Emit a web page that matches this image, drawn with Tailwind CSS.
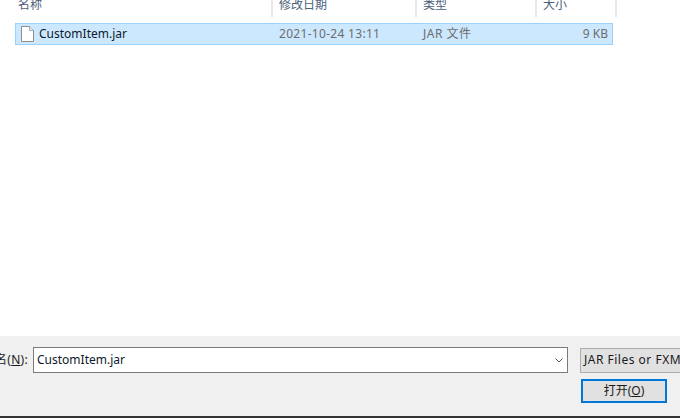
<!DOCTYPE html>
<html><head><meta charset="utf-8"><script src="https://cdn.jsdelivr.net/npm/@tailwindcss/browser@4"></script></head>
<body class="m-0 overflow-hidden bg-white">
<div class="w-[680px] h-[418px] flex flex-col overflow-hidden bg-white text-[12px] font-['Noto_Sans','Noto_Sans_CJK_SC',sans-serif]">
  <div class="h-[336px] flex flex-col shrink-0">
    <div class="h-[17px] flex shrink-0 text-[#4c607a] overflow-hidden">
      <div class="w-[273px] pl-[18px] border-r-2 border-[#e9e9e9] leading-[10px]">名称</div>
      <div class="w-[144px] pl-[6px] border-r-2 border-[#e9e9e9] leading-[10px]">修改日期</div>
      <div class="w-[120px] pl-[6px] border-r-2 border-[#e9e9e9] leading-[10px]">类型</div>
      <div class="w-[80px] pl-[6px] border-r-2 border-[#e9e9e9] leading-[10px]">大小</div>
    </div>
    <div class="ml-[15px] mt-[6px] w-[598px] h-[22px] flex items-center border border-[#99d1ff] bg-[#cce8ff]">
      <svg class="ml-[5px] shrink-0" width="13" height="16" viewBox="0 0 13 16"><path d="M.5.5h8l4 4v11H.5z" fill="#fff" stroke="#8f8f8f"/><path d="M8.5.5v4h4" fill="#f0f0f0" stroke="#a8a8a8"/></svg>
      <span class="ml-[5px] w-[240px] text-[#0c1a2b]">CustomItem.jar</span>
      <span class="w-[144px] text-[#6d6d6d] tracking-[.3px]">2021-10-24 13:11</span>
      <span class="w-[120px] text-[#6d6d6d] tracking-[.5px]">JAR 文件</span>
      <span class="w-[65px] text-right text-[#6d6d6d]">9 KB</span>
    </div>
  </div>
  <div class="h-[80px] bg-[#f0f0f0] shrink-0 relative flex flex-col">
    <div class="flex mt-[11px] h-[26px] items-center">
      <div class="w-[33px] shrink-0 flex justify-end pr-[5px] text-[#1a1a1a] overflow-hidden whitespace-nowrap tracking-[.3px]"><span>名(<u>N</u>):</span></div>
      <div class="w-[535px] h-[26px] shrink-0 bg-white border border-[#7a7a7a] flex items-center justify-between pl-[3px] pr-[4px] text-[#0c1a2b]">
        <span>CustomItem.jar</span>
        <svg width="8" height="5" viewBox="0 0 8 5" fill="none" stroke="#555"><path d="M.5.500 4 4 7.500.5"/></svg>
      </div>
      <div class="ml-[12px] flex-1 h-[25px] bg-[#e1e1e1] border border-[#adadad] border-r-0 pl-[3px] overflow-hidden whitespace-nowrap flex items-center text-[#1a1a1a] tracking-[.5px]">JAR Files or FXML Files</div>
    </div>
    <div class="ml-[581px] mt-[6px] w-[86px] h-[24px] bg-[#e1e1e1] border-2 border-[#0078d7] flex items-center justify-center text-[#1a1a1a]"><span>打开(<u>O</u>)</span></div>
  </div>
  <div class="flex-1 bg-[#333]"></div>
</div>
</body></html>
